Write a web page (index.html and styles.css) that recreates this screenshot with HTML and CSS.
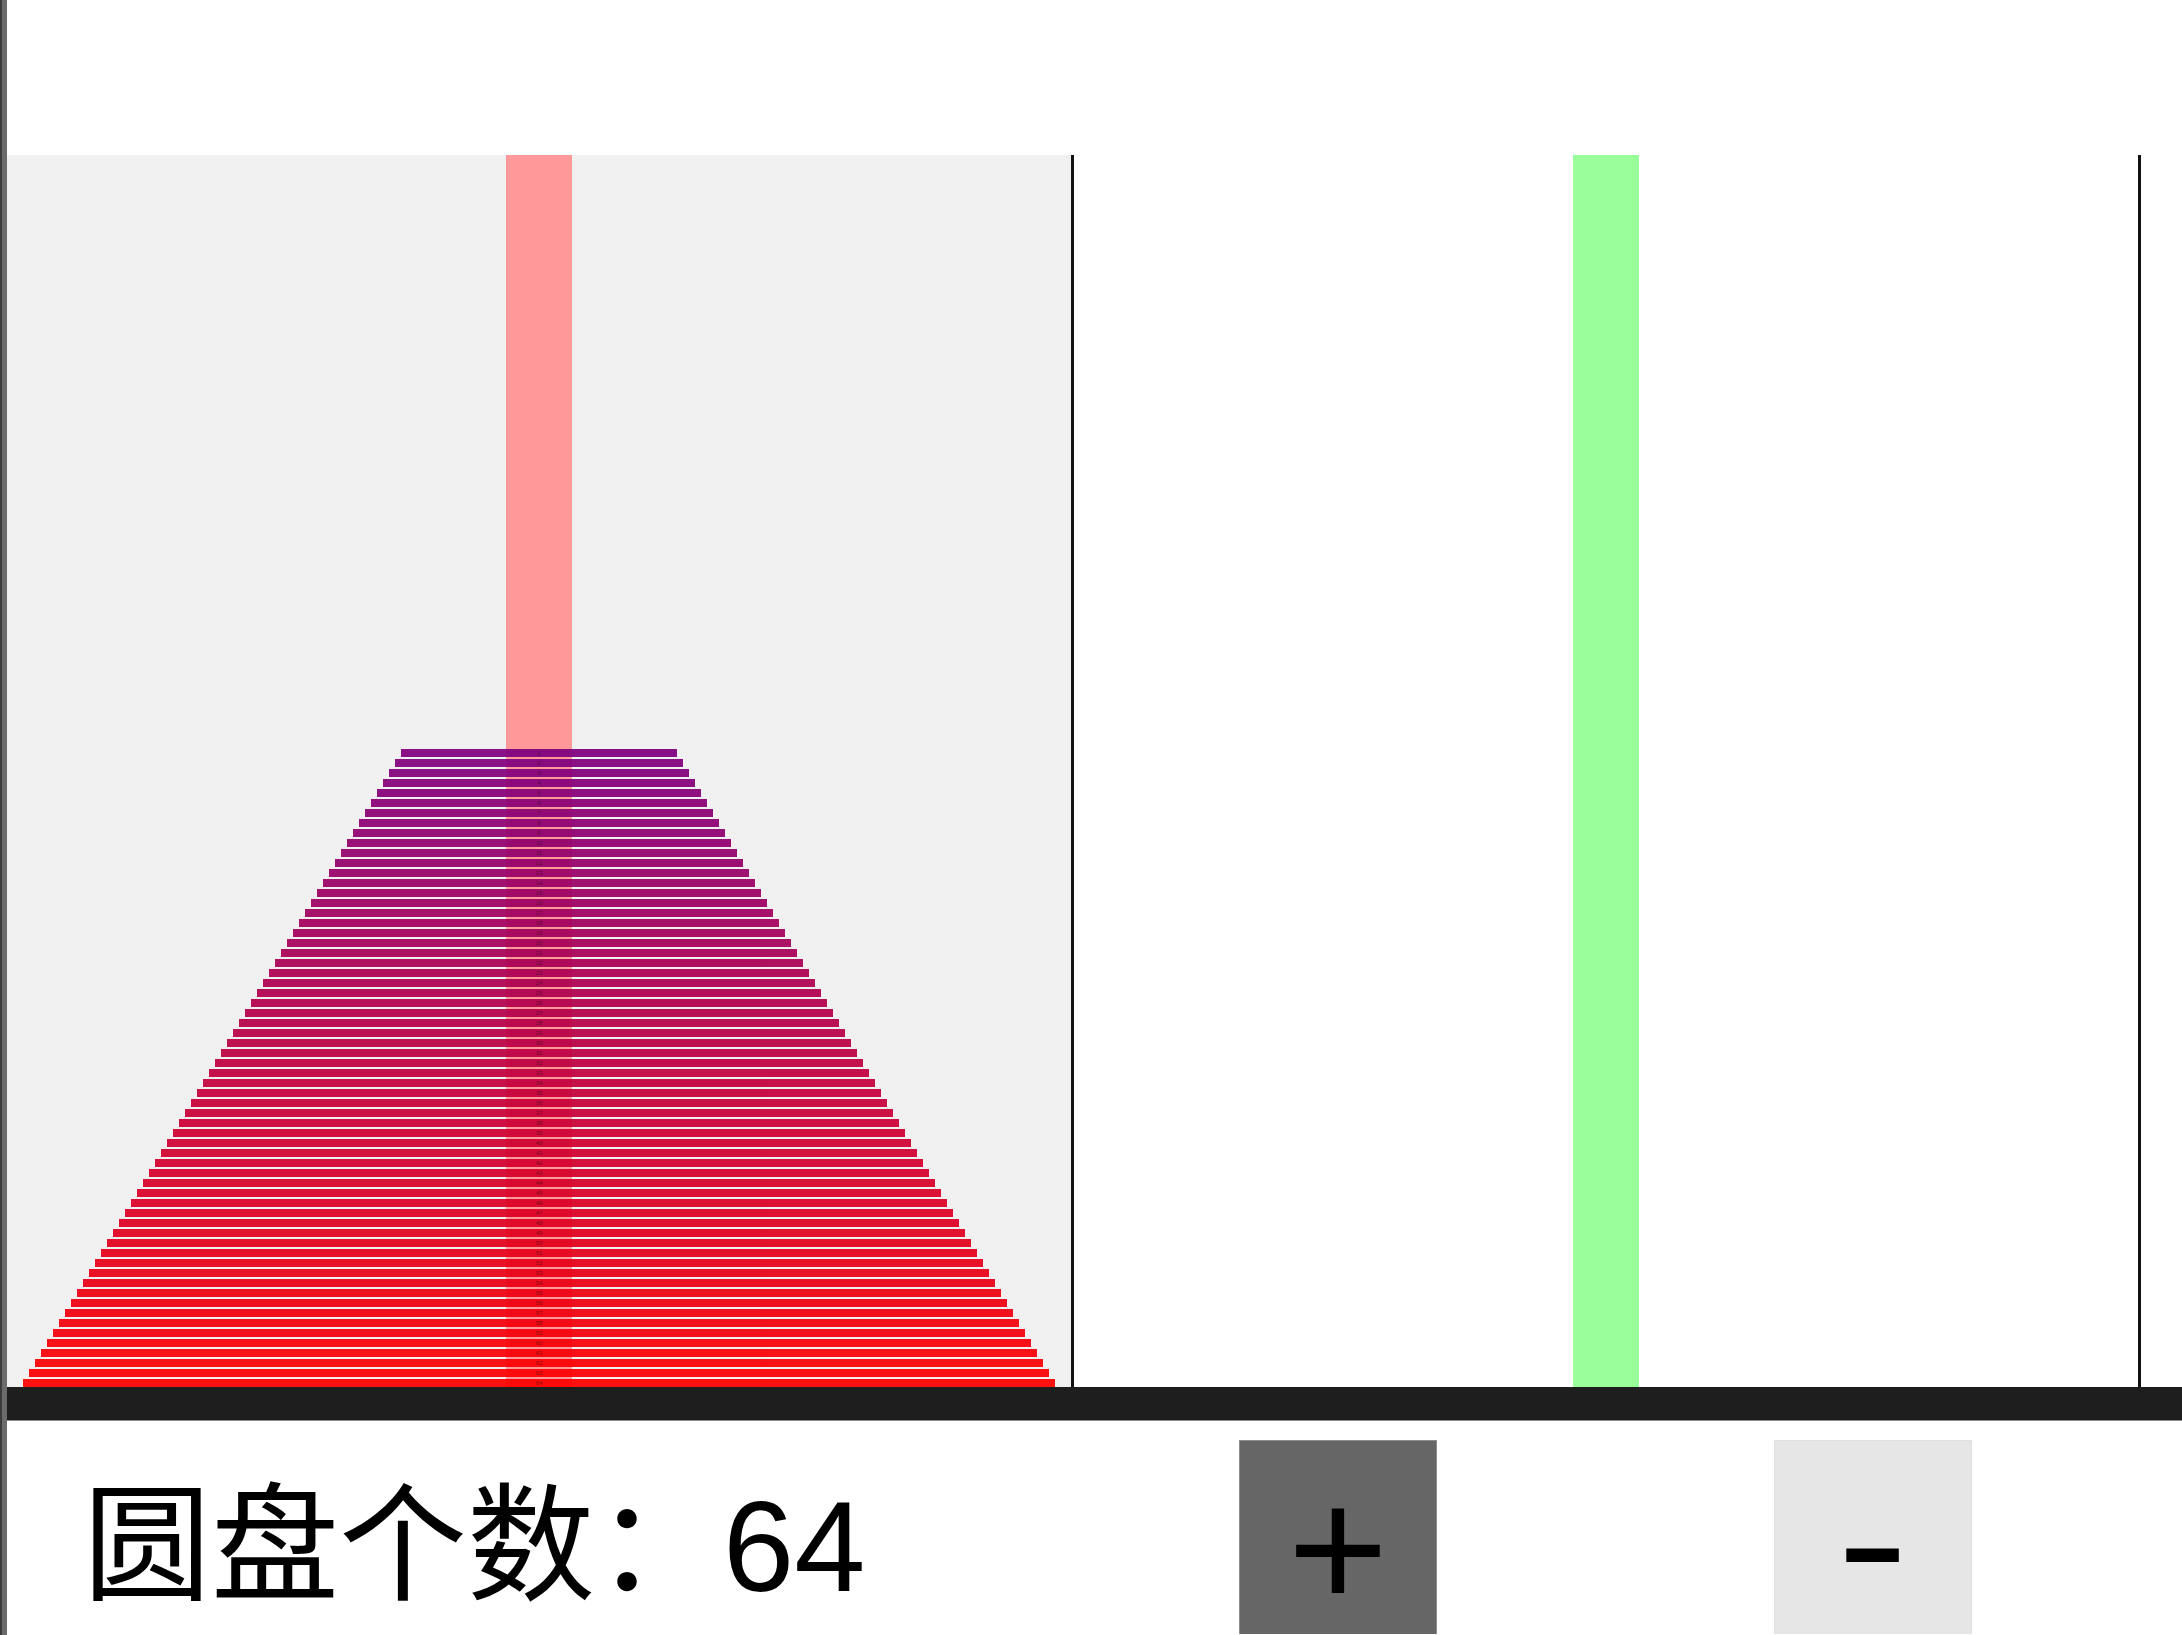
FILE: index.html
```html
<!DOCTYPE html>
<html lang="zh-CN">
<head>
<meta charset="utf-8">
<title>汉诺塔</title>
<link rel="stylesheet" href="styles.css">
</head>
<body>
<div class="frame">
  <div class="edge"></div>
  <div class="page">
    <div class="top-space"></div>
    <div class="stage">
      <div class="tower tower-active">
        <div class="pole pole-red"></div>
        <div class="stack">
          <div class="disk" style="width:276px;background:rgb(128,0,128)">1</div>
          <div class="disk" style="width:288px;background:rgb(130,0,126)">2</div>
          <div class="disk" style="width:300px;background:rgb(132,0,124)">3</div>
          <div class="disk" style="width:312px;background:rgb(134,0,122)">4</div>
          <div class="disk" style="width:324px;background:rgb(136,0,120)">5</div>
          <div class="disk" style="width:336px;background:rgb(138,0,118)">6</div>
          <div class="disk" style="width:348px;background:rgb(140,0,116)">7</div>
          <div class="disk" style="width:360px;background:rgb(142,0,114)">8</div>
          <div class="disk" style="width:372px;background:rgb(144,0,112)">9</div>
          <div class="disk" style="width:384px;background:rgb(146,0,110)">10</div>
          <div class="disk" style="width:396px;background:rgb(148,0,108)">11</div>
          <div class="disk" style="width:408px;background:rgb(150,0,106)">12</div>
          <div class="disk" style="width:420px;background:rgb(152,0,104)">13</div>
          <div class="disk" style="width:432px;background:rgb(154,0,102)">14</div>
          <div class="disk" style="width:444px;background:rgb(156,0,100)">15</div>
          <div class="disk" style="width:456px;background:rgb(158,0,98)">16</div>
          <div class="disk" style="width:468px;background:rgb(160,0,96)">17</div>
          <div class="disk" style="width:480px;background:rgb(162,0,93)">18</div>
          <div class="disk" style="width:492px;background:rgb(164,0,91)">19</div>
          <div class="disk" style="width:504px;background:rgb(166,0,89)">20</div>
          <div class="disk" style="width:516px;background:rgb(168,0,87)">21</div>
          <div class="disk" style="width:528px;background:rgb(170,0,85)">22</div>
          <div class="disk" style="width:540px;background:rgb(172,0,83)">23</div>
          <div class="disk" style="width:552px;background:rgb(174,0,81)">24</div>
          <div class="disk" style="width:564px;background:rgb(176,0,79)">25</div>
          <div class="disk" style="width:576px;background:rgb(178,0,77)">26</div>
          <div class="disk" style="width:588px;background:rgb(180,0,75)">27</div>
          <div class="disk" style="width:600px;background:rgb(182,0,73)">28</div>
          <div class="disk" style="width:612px;background:rgb(184,0,71)">29</div>
          <div class="disk" style="width:624px;background:rgb(186,0,69)">30</div>
          <div class="disk" style="width:636px;background:rgb(188,0,67)">31</div>
          <div class="disk" style="width:648px;background:rgb(190,0,65)">32</div>
          <div class="disk" style="width:660px;background:rgb(193,0,63)">33</div>
          <div class="disk" style="width:672px;background:rgb(195,0,61)">34</div>
          <div class="disk" style="width:684px;background:rgb(197,0,59)">35</div>
          <div class="disk" style="width:696px;background:rgb(199,0,57)">36</div>
          <div class="disk" style="width:708px;background:rgb(201,0,55)">37</div>
          <div class="disk" style="width:720px;background:rgb(203,0,53)">38</div>
          <div class="disk" style="width:732px;background:rgb(205,0,51)">39</div>
          <div class="disk" style="width:744px;background:rgb(207,0,49)">40</div>
          <div class="disk" style="width:756px;background:rgb(209,0,47)">41</div>
          <div class="disk" style="width:768px;background:rgb(211,0,45)">42</div>
          <div class="disk" style="width:780px;background:rgb(213,0,43)">43</div>
          <div class="disk" style="width:792px;background:rgb(215,0,41)">44</div>
          <div class="disk" style="width:804px;background:rgb(217,0,39)">45</div>
          <div class="disk" style="width:816px;background:rgb(219,0,37)">46</div>
          <div class="disk" style="width:828px;background:rgb(221,0,35)">47</div>
          <div class="disk" style="width:840px;background:rgb(223,0,33)">48</div>
          <div class="disk" style="width:852px;background:rgb(225,0,30)">49</div>
          <div class="disk" style="width:864px;background:rgb(227,0,28)">50</div>
          <div class="disk" style="width:876px;background:rgb(229,0,26)">51</div>
          <div class="disk" style="width:888px;background:rgb(231,0,24)">52</div>
          <div class="disk" style="width:900px;background:rgb(233,0,22)">53</div>
          <div class="disk" style="width:912px;background:rgb(235,0,20)">54</div>
          <div class="disk" style="width:924px;background:rgb(237,0,18)">55</div>
          <div class="disk" style="width:936px;background:rgb(239,0,16)">56</div>
          <div class="disk" style="width:948px;background:rgb(241,0,14)">57</div>
          <div class="disk" style="width:960px;background:rgb(243,0,12)">58</div>
          <div class="disk" style="width:972px;background:rgb(245,0,10)">59</div>
          <div class="disk" style="width:984px;background:rgb(247,0,8)">60</div>
          <div class="disk" style="width:996px;background:rgb(249,0,6)">61</div>
          <div class="disk" style="width:1008px;background:rgb(251,0,4)">62</div>
          <div class="disk" style="width:1020px;background:rgb(253,0,2)">63</div>
          <div class="disk" style="width:1032px;background:rgb(255,0,0)">64</div>
        </div>
      </div>
      <div class="tower">
        <div class="pole pole-green"></div>
        <div class="stack"></div>
      </div>
      <div class="tower">
        <div class="pole pole-blue"></div>
        <div class="stack"></div>
      </div>
    </div>
    <div class="base"></div>
    <div class="controls">
      <div class="count">圆盘个数：64</div>
      <button class="btn btn-plus" type="button">+</button>
      <button class="btn btn-minus" type="button"><span class="minus-glyph">-</span></button>
    </div>
  </div>
</div>
</body>
</html>
```

FILE: styles.css
```css
html, body {
  margin: 0;
  padding: 0;
  background: #ffffff;
  overflow: hidden;
  width: 2182px;
  height: 1635px;
}

.frame {
  display: flex;
  width: 2182px;
  height: 1635px;
  overflow: hidden;
}

.edge {
  flex: 0 0 7px;
  background: linear-gradient(to right, #3c3c3c 0, #3c3c3c 2px, #6b6b6b 2px, #6b6b6b 7px);
}

.page {
  flex: 1 1 auto;
  display: flex;
  flex-direction: column;
  min-width: 0;
}

.top-space {
  height: 155px;
  flex: 0 0 155px;
}

.stage {
  display: flex;
  height: 1232px;
  flex: 0 0 1232px;
  overflow: hidden;
}

.tower {
  flex: 0 0 1067px;
  box-sizing: border-box;
  border-right: 3px solid #111111;
  position: relative;
  display: flex;
  flex-direction: column;
  justify-content: flex-end;
  align-items: center;
  background: #ffffff;
}

.tower-active {
  background: #f0f0f0;
}

.pole {
  position: absolute;
  top: 0;
  bottom: 0;
  left: 50%;
  width: 66px;
  margin-left: -33px;
}

.pole-red { background: #ff9999; }
.pole-green { background: #99ff99; }
.pole-blue { background: #9999ff; }

.stack {
  position: relative;
  display: flex;
  flex-direction: column;
  align-items: center;
  gap: 1.5px;
}

.disk {
  height: 8.5px;
  opacity: 0.93;
  font-family: "Liberation Sans", sans-serif;
  font-size: 6px;
  line-height: 8.5px;
  text-align: center;
  color: rgba(0, 0, 0, 0.55);
}

.base {
  flex: 0 0 34px;
  height: 34px;
  box-sizing: border-box;
  background: #1e1e1e;
  border-bottom: 1px solid #8c8c8c;
}

.controls {
  display: flex;
  align-items: flex-start;
  padding-top: 19px;
}

.count {
  flex: 0 0 1232px;
  box-sizing: border-box;
  padding-left: 76px;
  margin-top: 43px;
  font-family: "Liberation Sans", "Noto Sans CJK SC", sans-serif;
  font-size: 128px;
  line-height: 128px;
  color: #000000;
  white-space: nowrap;
}

.btn {
  flex: 0 0 198px;
  width: 198px;
  height: 194px;
  box-sizing: border-box;
  margin: 0;
  padding: 20px 0 0 0;
  display: flex;
  align-items: center;
  justify-content: center;
  font-family: "Liberation Sans", sans-serif;
  font-weight: normal;
  font-size: 172px;
  line-height: 140px;
  color: #000000;
}

.btn-plus {
  background: #666666;
  border: 1px solid #8e8e8e;
  border-bottom: none;
}

.btn-minus {
  margin-left: 337px;
  padding-top: 6px;
  background: #e6e6e6;
  border: 1px solid #e0e0e0;
  border-bottom: none;
}

.minus-glyph {
  display: inline-block;
  transform: scaleX(1.25);
}
```
